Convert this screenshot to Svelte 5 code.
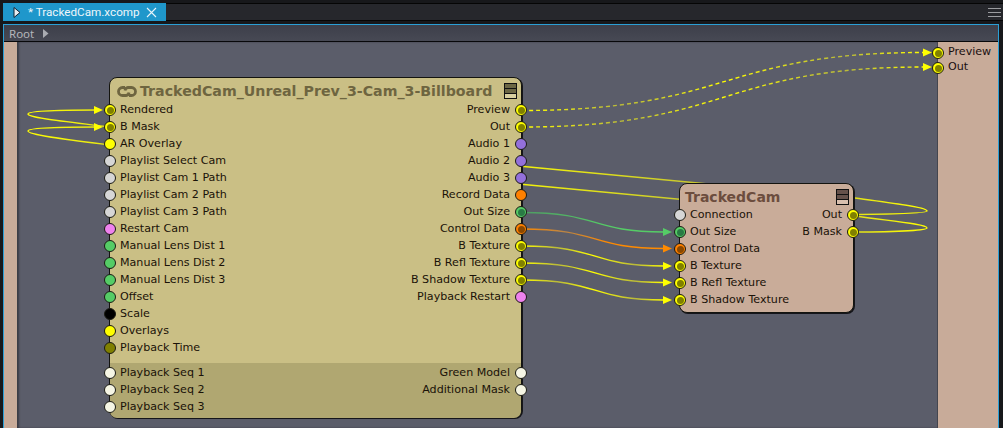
<script>
  const mainLeft = [
    { label: "Rendered", pin: "yellow linked" },
    { label: "B Mask", pin: "yellow linked" },
    { label: "AR Overlay", pin: "yellow" },
    { label: "Playlist Select Cam", pin: "grey" },
    { label: "Playlist Cam 1 Path", pin: "grey" },
    { label: "Playlist Cam 2 Path", pin: "grey" },
    { label: "Playlist Cam 3 Path", pin: "grey" },
    { label: "Restart Cam", pin: "pink" },
    { label: "Manual Lens Dist 1", pin: "green" },
    { label: "Manual Lens Dist 2", pin: "green" },
    { label: "Manual Lens Dist 3", pin: "green" },
    { label: "Offset", pin: "green" },
    { label: "Scale", pin: "black" },
    { label: "Overlays", pin: "yellow" },
    { label: "Playback Time", pin: "olive" }
  ];
  const mainRight = [
    { label: "Preview", pin: "yellow linked" },
    { label: "Out", pin: "yellow linked" },
    { label: "Audio 1", pin: "purple" },
    { label: "Audio 2", pin: "purple" },
    { label: "Audio 3", pin: "purple" },
    { label: "Record Data", pin: "orange" },
    { label: "Out Size", pin: "green linked" },
    { label: "Control Data", pin: "orange linked" },
    { label: "B Texture", pin: "yellow linked" },
    { label: "B Refl Texture", pin: "yellow linked" },
    { label: "B Shadow Texture", pin: "yellow linked" },
    { label: "Playback Restart", pin: "pink" }
  ];
  const lowerLeft = ["Playback Seq 1", "Playback Seq 2", "Playback Seq 3"].map((label) => ({ label, pin: "cream" }));
  const lowerRight = ["Green Model", "Additional Mask"].map((label) => ({ label, pin: "cream" }));
  const camLeft = [
    { label: "Connection", pin: "grey" },
    { label: "Out Size", pin: "green linked" },
    { label: "Control Data", pin: "orange linked" },
    { label: "B Texture", pin: "yellow linked" },
    { label: "B Refl Texture", pin: "yellow linked" },
    { label: "B Shadow Texture", pin: "yellow linked" }
  ];
  const camRight = [
    { label: "Out", pin: "yellow linked" },
    { label: "B Mask", pin: "yellow linked" }
  ];
  const compOut = [
    { label: "Preview", pin: "yellow linked" },
    { label: "Out", pin: "yellow linked" }
  ];

  // feedback wires run behind both nodes
  const solid = [
    { d: "M854 214.5C900 214 927 213 927 211C927 207 890 203 855 198L110 127C70 122 28 118 28 114C28 111 60 110 96 110", c: "url(#fadeY)" },
    { d: "M854 232C900 232 927 230 927 228C927 224 890 221 855 216L110 145C70 140 28 135 28 131C28 128 60 127 96 127", c: "url(#fadeY)" },
    { d: "M522 212.5C600 212.5 590 232 664 232", c: "url(#fadeG)" },
    { d: "M522 229C600 229 590 248.5 664 248.5", c: "url(#fadeO)" },
    { d: "M522 246C600 246 590 266 664 266", c: "url(#fadeY)" },
    { d: "M522 263C600 263 590 282.500 664 282.500", c: "url(#fadeY)" },
    { d: "M522 280C600 280 590 300 664 300", c: "url(#fadeY)" }
  ];
  const dashed = [
    "M522 110.500C730 110.500 720 52.500 924 52.500",
    "M522 127C730 127 720 67 924 67"
  ];
  const arrows = [
    { x: 103, y: 110, c: "#ffff00" },
    { x: 103, y: 127, c: "#ffff00" },
    { x: 672, y: 232, c: "#55cc66" },
    { x: 672, y: 248.500, c: "#ff8a00" },
    { x: 672, y: 266, c: "#ffff00" },
    { x: 672, y: 282.500, c: "#ffff00" },
    { x: 672, y: 300, c: "#ffff00" },
    { x: 932, y: 52.500, c: "#ffff00" },
    { x: 932, y: 67, c: "#ffff00" }
  ];
</script>

{#snippet port(p, side)}
  <div class="port {side}">
    <span class="pin {p.pin}"></span>
    <span class="label">{p.label}</span>
  </div>
{/snippet}

{#snippet stack()}
  <svg class="stack" width="13" height="16" viewBox="0 0 13 16">
    <rect x="0.500" y="0.500" width="12" height="15" fill="currentColor" stroke="#111" />
    <path d="M1 5.500H12M1 10.500H12" stroke="#111" />
    <rect x="1" y="11" width="11" height="4" fill="#d8cfa0" class="stack-low" />
  </svg>
{/snippet}

<div class="window">
  <div class="tabbar">
    <div class="tab">
      <svg class="tabplay" width="8" height="11" viewBox="0 0 8 11"><path d="M1 .5L7 5.500L1 10.500Z" fill="#e8eef2" stroke="#123" /></svg>
      <span class="tabname">* TrackedCam.xcomp</span>
      <svg class="tabclose" width="11" height="11" viewBox="0 0 11 11"><path d="M1 1L10 10M10 1L1 10" stroke="#e8f4fa" stroke-width="1.100" /></svg>
    </div>
    <div class="tabrest">
      <div class="burger"><i></i><i></i><i></i></div>
    </div>
  </div>

  <div class="panel">
    <div class="crumbs">
      <span>Root</span>
      <svg width="6" height="9" viewBox="0 0 6 9"><path d="M0 0L5.500 4.500L0 9Z" fill="#a9abb1" /></svg>
    </div>
    <div class="body">
      <div class="strip"></div>
      <div class="graph">
        <div class="nodes">
          <svg class="wires" width="995" height="386" viewBox="4 42 995 386">
            <defs>
              <linearGradient id="fadeY">
                <stop offset="0" stop-color="#ffff00" /><stop offset=".25" stop-color="#b9b93a" /><stop offset=".5" stop-color="#ffff00" /><stop offset=".8" stop-color="#b9b93a" /><stop offset="1" stop-color="#ffff00" />
              </linearGradient>
              <linearGradient id="fadeG">
                <stop offset="0" stop-color="#4f9a63" /><stop offset=".6" stop-color="#55cc66" /><stop offset="1" stop-color="#55cc66" />
              </linearGradient>
              <linearGradient id="fadeO">
                <stop offset="0" stop-color="#ff8a00" /><stop offset=".3" stop-color="#b98445" /><stop offset=".6" stop-color="#ff8a00" /><stop offset="1" stop-color="#ff8a00" />
              </linearGradient>
            </defs>
            {#each solid as w}
              <path d={w.d} fill="none" stroke={w.c} stroke-width="1.400" />
            {/each}
            {#each dashed as d}
              <path {d} fill="none" stroke="url(#fadeY)" stroke-width="1.400" stroke-dasharray="4 3" />
            {/each}
            {#each arrows as a}
              <path d="M{a.x} {a.y}l-9 -4v8z" fill={a.c} />
            {/each}
          </svg>

          <section class="node main">
            <header class="title">
              <svg class="link" width="20" height="11" viewBox="0 0 20 11" fill="none" stroke="currentColor" stroke-width="2.800">
                <path d="M8 1.500H5.500a4 4 0 0 0 0 8H9a3.500 3.500 0 0 0 3 -3" />
                <path d="M12 9.500h2.500a4 4 0 0 0 0 -8H11a3.500 3.500 0 0 0 -3 3" />
              </svg>
              <span class="name">TrackedCam_Unreal_Prev_3-Cam_3-Billboard</span>
              {@render stack()}
            </header>
            <div class="cols upper">
              <div>{#each mainLeft as p}{@render port(p, "in")}{/each}</div>
              <div>{#each mainRight as p}{@render port(p, "out")}{/each}</div>
            </div>
            <div class="cols lower">
              <div>{#each lowerLeft as p}{@render port(p, "in")}{/each}</div>
              <div>{#each lowerRight as p}{@render port(p, "out")}{/each}</div>
            </div>
          </section>

          <section class="node cam">
            <header class="title">
              <span class="name">TrackedCam</span>
              {@render stack()}
            </header>
            <div class="cols">
              <div>{#each camLeft as p}{@render port(p, "in")}{/each}</div>
              <div>{#each camRight as p}{@render port(p, "out")}{/each}</div>
            </div>
          </section>
        </div>
      </div>
      <div class="outputs">
        {#each compOut as p}{@render port(p, "in")}{/each}
      </div>
    </div>
  </div>
</div>

<style>
  :global(body) {
    margin: 0;
    background: #17181b;
  }

  .window {
    width: 1003px;
    height: 428px;
    display: flex;
    flex-direction: column;
    overflow: hidden;
    font-family: "DejaVu Sans", sans-serif;
    font-size: 11.100px;
  }

  .tabbar {
    display: flex;
    height: 18px;
    margin: 3px 0 3px 3px;
  }

  .tab {
    width: 163px;
    box-sizing: border-box;
    display: flex;
    align-items: center;
    padding-left: 10px;
    background: #1f97cb;
    color: #eef6fa;
    font-family: Roboto, sans-serif;
    font-size: 11.700px;
  }

  .tabplay {
    flex: none;
  }

  .tabname {
    margin-left: 7px;
    flex: 1;
    white-space: nowrap;
  }

  .tabclose {
    flex: none;
    margin-right: 9px;
  }

  .tabrest {
    flex: 1;
    display: flex;
    justify-content: flex-end;
    align-items: center;
    background: #26272c;
    border-top: 1px solid #050505;
    border-bottom: 1px solid #050505;
  }

  .burger {
    display: flex;
    flex-direction: column;
    gap: 3px;
    width: 13px;
    margin-right: 2px;
  }

  .burger i {
    height: 1px;
    background: #9b9ca0;
  }

  .panel {
    flex: 1;
    display: flex;
    flex-direction: column;
    margin: 0 4px 0 3px;
    border: 1px solid #2a9fd6;
    border-bottom: 0;
    min-height: 0;
  }

  .crumbs {
    height: 16px;
    display: flex;
    align-items: center;
    gap: 9px;
    padding-left: 5px;
    color: #b4b6bb;
    background: linear-gradient(#3d3f4a, #474954);
    border-bottom: 1px solid #08080a;
    font-family: "Noto Sans", sans-serif;
    font-size: 11.500px;
  }

  .body {
    flex: 1;
    display: flex;
    min-height: 0;
  }

  .strip {
    width: 13px;
    background: #c8ab99;
  }

  .graph {
    flex: 1;
    position: relative;
    background: #5b5d6a;
    box-shadow: inset 2px 0 2px #3a3b44;
  }

  .nodes {
    position: absolute;
    inset: 0;
  }

  .wires {
    position: absolute;
    left: -13px;
    top: 0;
    z-index: 2;
    pointer-events: none;
  }

  .outputs {
    width: 61px;
    box-sizing: border-box;
    padding-top: 2px;
    background: #c8ab99;
    border-left: 1px solid #44454e;
    position: relative;
    z-index: 1;
    margin-left: -1px;
    color: #1a0f10;
  }

  .outputs .port {
    height: 15px;
    padding-left: 11px;
  }

  .outputs .pin {
    left: -7px;
    top: 3px;
    z-index: 3;
  }

  .node {
    position: absolute;
    box-sizing: border-box;
    z-index: 3;
    border: 1px solid #14140f;
    border-radius: 8px;
    box-shadow: 1px 1px 0 #15151a;
    color: #1a1208;
  }

  .main {
    left: 92px;
    top: 35px;
    width: 413px;
    height: 341px;
    background: #cabf85;
  }

  .cam {
    left: 662px;
    top: 141px;
    width: 175px;
    height: 130px;
    background: #c9ac99;
  }

  .title {
    display: flex;
    align-items: center;
    height: 24px;
    padding: 2px 4px 0 7px;
    box-sizing: border-box;
    font-size: 14.200px;
    font-weight: 700;
    white-space: nowrap;
  }

  .main .title {
    gap: 3px;
    color: #6e6540;
  }

  .cam .title {
    color: #6c4d3e;
    height: 23px;
    padding: 3px 4px 0 5px;
    font-size: 14px;
  }

  .link {
    flex: none;
  }

  .name {
    flex: 1;
  }

  .stack {
    color: #6b6644;
    flex: none;
  }

  .cam .stack {
    color: #66524b;
  }

  .cam .stack-low {
    fill: #d8bfae;
  }

  .cols {
    display: flex;
    justify-content: space-between;
  }

  .upper {
    padding-bottom: 6px;
  }

  .lower {
    padding: 2px 0;
    background: #b0a771;
    border-radius: 0 0 7px 7px;
  }

  .port {
    position: relative;
    height: 17px;
    line-height: 16px;
    white-space: nowrap;
  }

  .port.in {
    padding-left: 10px;
  }

  .port.out {
    padding-right: 11px;
    text-align: right;
  }

  .pin {
    position: absolute;
    top: 2px;
    box-sizing: border-box;
    width: 12px;
    height: 12px;
    border-radius: 50%;
    border: 1px solid #1b1b14;
    display: flex;
    align-items: center;
    justify-content: center;
  }

  .in .pin {
    left: -6px;
  }

  .out .pin {
    right: -6px;
  }

  .linked::after {
    content: "";
    width: 7px;
    height: 7px;
    border-radius: 50%;
  }

  .yellow { background: #ffff00; }
  .yellow.linked::after { background: #808000; }
  .green { background: #55cc66; }
  .green.linked::after { background: #2a7a45; }
  .orange { background: #ff8000; }
  .orange.linked::after { background: #8a4800; }
  .grey { background: #d6d6d6; }
  .pink { background: #ee82ee; }
  .black { background: #000; }
  .olive { background: #808000; }
  .cream { background: #f5f5e4; }
  .purple { background: #9370db; }
</style>
